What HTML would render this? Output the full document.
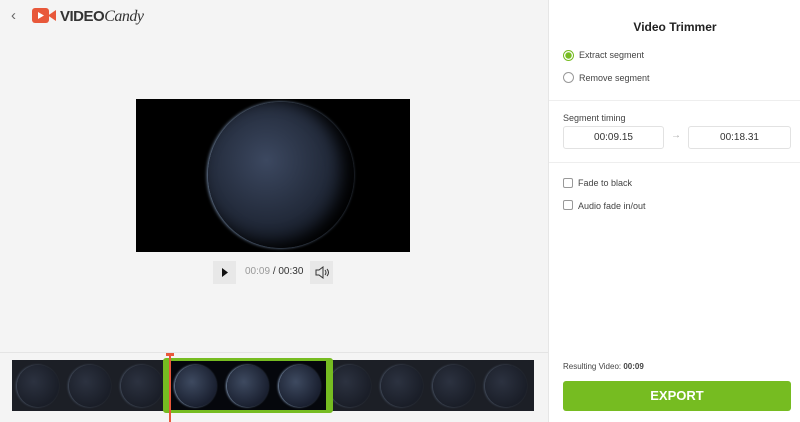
<!DOCTYPE html><html><head><style>
*{margin:0;padding:0;box-sizing:border-box}
body{width:800px;height:422px;overflow:hidden;background:#f4f4f4;font-family:"Liberation Sans",sans-serif;position:relative;color:#333}
.abs{position:absolute}
.panel{left:548px;top:0;width:252px;height:422px;background:#fff;border-left:1px solid #e6e6e6}
.lbl{font-size:9px;color:#444}
.radio{width:11px;height:11px;border-radius:50%;border:1px solid #999}
.chk{width:10px;height:10px;border:1px solid #999;border-radius:2px}
.inp{height:23px;border:1px solid #e2e2e2;border-radius:3px;font-size:10px;text-align:center;line-height:21px;color:#333}
.th{width:52px;height:51px;flex:none;overflow:hidden}
.th div{width:42px;height:42px;border-radius:50%;margin:5px 0 0 5px;background:radial-gradient(circle at 40% 40%,#2c3240,#1a1e28 70%);box-shadow:-1px 0 2px #4a5466}
.g{width:42px;height:42px;border-radius:50%;background:radial-gradient(circle at 40% 40%,#3e4a60,#1a2030 70%);box-shadow:-1px 0 2px #8aa0c0}
</style></head><body>
<div class="abs" style="left:11px;top:7px;font-size:15px;color:#666">‹</div>
<svg class="abs" style="left:32px;top:8px" width="24" height="15"><rect x="0" y="0" width="17" height="15" rx="3" fill="#e8583a"/><path d="M16 7.5 L24 2 V13Z" fill="#e8583a"/><path d="M6 4 L12 7.5 L6 11Z" fill="#fff"/></svg>
<div class="abs" style="left:60px;top:8px;font-size:15px;font-weight:bold;color:#333;letter-spacing:-0.5px">VIDEO<span style="font-family:'Liberation Serif',serif;font-style:italic;font-weight:normal;font-size:16px">Candy</span></div>
<div class="abs" style="left:136px;top:99px;width:274px;height:153px;background:#000;overflow:hidden">
<div class="abs" style="left:72px;top:3px;width:146px;height:146px;border-radius:50%;background:radial-gradient(circle at 40% 40%,#3c4860,#222a3a 50%,#0c1018 80%);box-shadow:inset -10px -4px 16px #000, -1px 0 3px #7a90b0"></div>
</div>
<div class="abs" style="left:213px;top:261px;width:23px;height:23px;background:#e8e8e8"><svg width="23" height="23"><path d="M9 7 L15 11.5 L9 16Z" fill="#111"/></svg></div>
<div class="abs" style="left:245px;top:266px;font-size:10px;color:#999">00:09 <span style="color:#333">/ 00:30</span></div>
<div class="abs" style="left:310px;top:261px;width:23px;height:23px;background:#e8e8e8"><svg width="23" height="23"><path d="M6 9h3l4-3v11l-4-3H6z" fill="none" stroke="#333"/><path d="M15 9q2 2.5 0 5M17 8q3 3.5 0 7" fill="none" stroke="#333"/></svg></div>
<div class="abs" style="left:0;top:352px;width:548px;height:70px;background:#f4f4f4;border-top:1px solid #e4e4e4"></div>
<div class="abs" style="left:12px;top:360px;width:522px;height:51px;display:flex;background:#1c1f26">
<div class="th"><div></div></div><div class="th"><div></div></div><div class="th"><div></div></div><div class="th"><div></div></div><div class="th"><div></div></div><div class="th"><div></div></div><div class="th"><div></div></div><div class="th"><div></div></div><div class="th"><div></div></div><div class="th"><div></div></div></div>
<div class="abs" style="left:163px;top:358px;width:170px;height:55px;border:3px solid #76bc21;border-left-width:7px;border-right-width:7px;border-radius:3px;background:#05070c;display:flex;justify-content:space-around;align-items:center">
<div class="g"></div><div class="g"></div><div class="g"></div></div>
<div class="abs" style="left:169px;top:354px;width:2px;height:68px;background:#e8583a"></div>
<div class="abs" style="left:166px;top:353px;width:8px;height:3px;background:#e8583a"></div>
<div class="abs panel">
<div class="abs" style="left:0;width:252px;top:20px;text-align:center;font-size:12px;font-weight:bold;color:#222">Video Trimmer</div>
<div class="abs radio" style="left:14px;top:50px;border-color:#76bc21;background:radial-gradient(#76bc21 45%,#fff 55%)"></div>
<div class="abs lbl" style="left:30px;top:50px">Extract segment</div>
<div class="abs radio" style="left:14px;top:72px"></div>
<div class="abs lbl" style="left:30px;top:73px">Remove segment</div>
<div class="abs" style="left:0;top:100px;width:252px;height:1px;background:#eee"></div>
<div class="abs lbl" style="left:14px;top:113px">Segment timing</div>
<div class="abs inp" style="left:14px;top:126px;width:101px">00:09.15</div>
<div class="abs" style="left:122px;top:130px;font-size:10px;color:#aaa">→</div>
<div class="abs inp" style="left:139px;top:126px;width:103px">00:18.31</div>
<div class="abs" style="left:0;top:162px;width:252px;height:1px;background:#eee"></div>
<div class="abs chk" style="left:14px;top:178px"></div>
<div class="abs lbl" style="left:29px;top:178px">Fade to black</div>
<div class="abs chk" style="left:14px;top:200px"></div>
<div class="abs lbl" style="left:29px;top:201px">Audio fade in/out</div>
<div class="abs lbl" style="left:14px;top:362px;font-size:8px">Resulting Video: <b>00:09</b></div>
<div class="abs" style="left:14px;top:381px;width:228px;height:30px;background:#76bc21;border-radius:3px;color:#fff;font-weight:bold;font-size:13px;text-align:center;line-height:30px">EXPORT</div>
</div>
</body></html>
